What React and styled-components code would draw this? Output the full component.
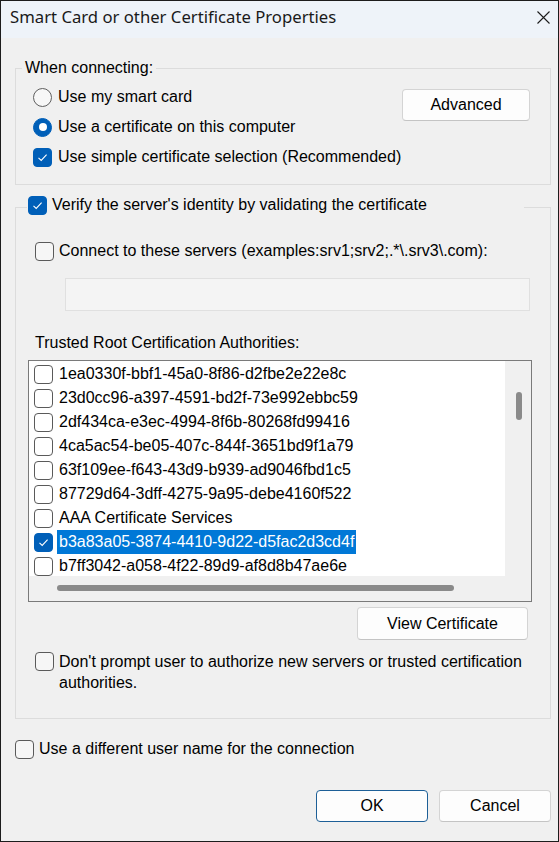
import React from "react";
import styled, { createGlobalStyle, css } from "styled-components";

const GlobalStyle = createGlobalStyle`
  body {
    margin: 0;
    background: #f0f0f0;
    font-family: "Liberation Sans", Arial, sans-serif;
    color: #000;
  }
`;

// certificate authorities shown in the trusted root list
const authorities = [
  { name: "1ea0330f-bbf1-45a0-8f86-d2fbe2e22e8c" },
  { name: "23d0cc96-a397-4591-bd2f-73e992ebbc59" },
  { name: "2df434ca-e3ec-4994-8f6b-80268fd99416" },
  { name: "4ca5ac54-be05-407c-844f-3651bd9f1a79" },
  { name: "63f109ee-f643-43d9-b939-ad9046fbd1c5" },
  { name: "87729d64-3dff-4275-9a95-debe4160f522" },
  { name: "AAA Certificate Services" },
  { name: "b3a83a05-3874-4410-9d22-d5fac2d3cd4f", checked: true, selected: true },
  { name: "b7ff3042-a058-4f22-89d9-af8d8b47ae6e" },
];

const Checkbox = ({ checked, white }) => (
  <Box $checked={checked} $white={white}>
    {checked && (
      <svg width="19" height="19" viewBox="0 0 19 19">
        <polyline
          points="5.5,9.8 8.2,12.4 13.6,6.6"
          fill="none"
          stroke="#fff"
          strokeWidth="1.1"
        />
      </svg>
    )}
  </Box>
);

const App = () => {
  return (
    <>
      <GlobalStyle />
      <Window>
        <TitleBar>
          <Title>Smart Card or other Certificate Properties</Title>
          <svg width="13" height="13" viewBox="0 0 13 13">
            <path d="M0.5 0.5 L12.5 12.5 M12.5 0.5 L0.5 12.5" stroke="#1b1b1b" strokeWidth="1.1" />
          </svg>
        </TitleBar>

        <Body>
          <Group>
            <Legend>When connecting:</Legend>
            <ConnectInner>
              <Options>
                <Option>
                  <Radio />
                  Use my smart card
                </Option>
                <Option>
                  <Radio $checked />
                  Use a certificate on this computer
                </Option>
                <Option>
                  <Checkbox checked />
                  Use simple certificate selection (Recommended)
                </Option>
              </Options>
              <Button $width={128} $top={7}>Advanced</Button>
            </ConnectInner>
          </Group>
          {/* End connecting group */}

          <Group $top={10}>
            <CheckLegend>
              <Checkbox checked />
              Verify the server's identity by validating the certificate
            </CheckLegend>
            <VerifyInner>
              <CheckRow $left={19} $top={22}>
                <Checkbox />
                Connect to these servers (examples:srv1;srv2;.*\.srv3\.com):
              </CheckRow>
              <ServerInput />
              <Caption>Trusted Root Certification Authorities:</Caption>

              <CertList>
                <Rows>
                  {authorities.map((val, i) => (
                    <CertRow key={i}>
                      <Checkbox checked={val.checked} white />
                      <CertName $selected={val.selected}>{val.name}</CertName>
                    </CertRow>
                  ))}
                </Rows>
                <VTrack>
                  <VThumb />
                </VTrack>
                <HTrack>
                  <HThumb />
                </HTrack>
                <Corner />
              </CertList>

              <ViewRow>
                <Button $width={171} $height={33}>View Certificate</Button>
              </ViewRow>

              <PromptRow>
                <Checkbox />
                <PromptText>
                  Don't prompt user to authorize new servers or trusted certification
                  authorities.
                </PromptText>
              </PromptRow>
            </VerifyInner>
          </Group>
          {/* End verify group */}

          <CheckRow $top={20}>
            <Checkbox />
            Use a different user name for the connection
          </CheckRow>

          <Footer>
            <Button $width={112} $primary>OK</Button>
            <Button $width={112}>Cancel</Button>
          </Footer>
        </Body>
      </Window>
    </>
  );
};

export default App;

const Window = styled.div`
  width: 559px;
  height: 842px;
  box-sizing: border-box;
  border: 1px solid #1c1c1c;
  background: #f0f0f0;
  display: flex;
  flex-direction: column;
  font-size: 16px;
`;

const TitleBar = styled.div`
  height: 37px;
  flex-shrink: 0;
  background: #eef3f9;
  display: flex;
  align-items: center;
  justify-content: space-between;
  padding: 0 8px 4px 9px;
  box-sizing: border-box;
`;

const Title = styled.div`
  font-family: "Noto Sans", "Open Sans", sans-serif;
  font-size: 16.7px;
  color: #1a1a1a;
  margin-top: -3px;
`;

const Body = styled.div`
  flex: 1;
  display: flex;
  flex-direction: column;
  padding: 0 7px 0 14px;
`;

const Group = styled.fieldset`
  margin: ${(p) => p.$top ?? 21}px 0 0;
  padding: 0;
  min-width: 0;
  border: 1px solid #dcdcdc;
`;

const Legend = styled.legend`
  margin-left: 6px;
  padding: 0 3px;
  line-height: 18px;
`;

const CheckLegend = styled.legend`
  margin-left: 11px;
  width: 497px;
  box-sizing: border-box;
  padding: 0 0 4px 1px;
  display: flex;
  align-items: center;
  gap: 5px;
  line-height: 20px;
`;

const ConnectInner = styled.div`
  display: flex;
  justify-content: space-between;
  align-items: flex-start;
  padding: 5px 20px 12px 17px;
`;

const Options = styled.div`
  display: flex;
  flex-direction: column;
`;

const Option = styled.label`
  height: 30px;
  display: flex;
  align-items: center;
  gap: 6px;
`;

const Radio = styled.span`
  width: 19px;
  height: 19px;
  box-sizing: border-box;
  border-radius: 50%;
  border: 1px solid ${(p) => (p.$checked ? "#005fb8" : "#5f5f5f")};
  background: ${(p) => (p.$checked ? "#005fb8" : "#f7f7f7")};
  display: flex;
  align-items: center;
  justify-content: center;

  &::after {
    content: "";
    display: ${(p) => (p.$checked ? "block" : "none")};
    width: 8px;
    height: 8px;
    border-radius: 50%;
    background: #fff;
  }
`;

const Box = styled.span`
  flex-shrink: 0;
  width: 19px;
  height: 19px;
  box-sizing: border-box;
  border-radius: 4px;
  display: flex;
  ${(p) =>
    p.$checked
      ? css`
          background: #005fb8;
          border: 1px solid #005fb8;
        `
      : css`
          background: ${p.$white ? "#fff" : "#f6f6f6"};
          border: 1px solid #5a5a5a;
        `}

  svg {
    margin: -1px;
  }
`;

const Button = styled.button`
  width: ${(p) => p.$width}px;
  height: ${(p) => p.$height ?? 32}px;
  margin-top: ${(p) => p.$top ?? 0}px;
  flex-shrink: 0;
  font-family: "Liberation Sans", Arial, sans-serif;
  font-size: 16px;
  color: #000;
  background: #fdfdfd;
  border: 1px solid ${(p) => (p.$primary ? "#1d5f97" : "#d4d4d4")};
  border-bottom-color: ${(p) => (p.$primary ? "#1d5f97" : "#c4c4c4")};
  border-radius: 4px;
  padding: 0;
`;

const VerifyInner = styled.div`
  display: flex;
  flex-direction: column;
  padding-bottom: 25px;
`;

const CheckRow = styled.label`
  margin: ${(p) => p.$top ?? 0}px 0 0 ${(p) => p.$left ?? 0}px;
  height: 20px;
  display: flex;
  align-items: center;
  gap: 5px;
`;

const ServerInput = styled.div`
  margin: 17px 20px 0 49px;
  height: 33px;
  box-sizing: border-box;
  background: #f4f4f4;
  border: 1px solid #e0e0e0;
`;

const Caption = styled.div`
  margin: 22px 0 0 19px;
  line-height: 20px;
`;

const CertList = styled.div`
  margin: 7px 18px 0 12px;
  height: 242px;
  box-sizing: border-box;
  border: 1px solid #7a7a7a;
  display: grid;
  grid-template-columns: 1fr 26px;
  grid-template-rows: 1fr 25px;
  background: #fff;
`;

const Rows = styled.div`
  overflow: hidden;
  padding-top: 1px;
`;

const CertRow = styled.div`
  height: 24px;
  display: flex;
  align-items: center;
  padding-left: 5px;
  gap: 4px;
  white-space: nowrap;
`;

const CertName = styled.span`
  line-height: 24px;
  padding: 0 2px;
  background: ${(p) => (p.$selected ? "#0078d7" : "transparent")};
  color: ${(p) => (p.$selected ? "#fff" : "#000")};
`;

const VTrack = styled.div`
  background: #f0f0f0;
  display: flex;
  justify-content: center;
  padding-top: 31px;
  padding-left: 1px;
`;

const VThumb = styled.div`
  width: 6px;
  height: 28px;
  border-radius: 3px;
  background: #8a8a8a;
`;

const HTrack = styled.div`
  background: #f0f0f0;
  display: flex;
  align-items: center;
  padding: 0 0 2px 28px;
`;

const HThumb = styled.div`
  width: 397px;
  height: 6px;
  border-radius: 3px;
  background: #8a8a8a;
`;

const Corner = styled.div`
  background: #f0f0f0;
`;

const ViewRow = styled.div`
  display: flex;
  justify-content: flex-end;
  margin: 5px 22px 0 0;
`;

const PromptRow = styled.label`
  margin: 11px 0 0 19px;
  display: flex;
  align-items: flex-start;
  gap: 5px;

  ${Box} {
    margin-top: 1px;
  }
`;

const PromptText = styled.span`
  line-height: 21px;
`;

const Footer = styled.div`
  margin-top: 31px;
  display: flex;
  justify-content: flex-end;
  gap: 11px;
`;
